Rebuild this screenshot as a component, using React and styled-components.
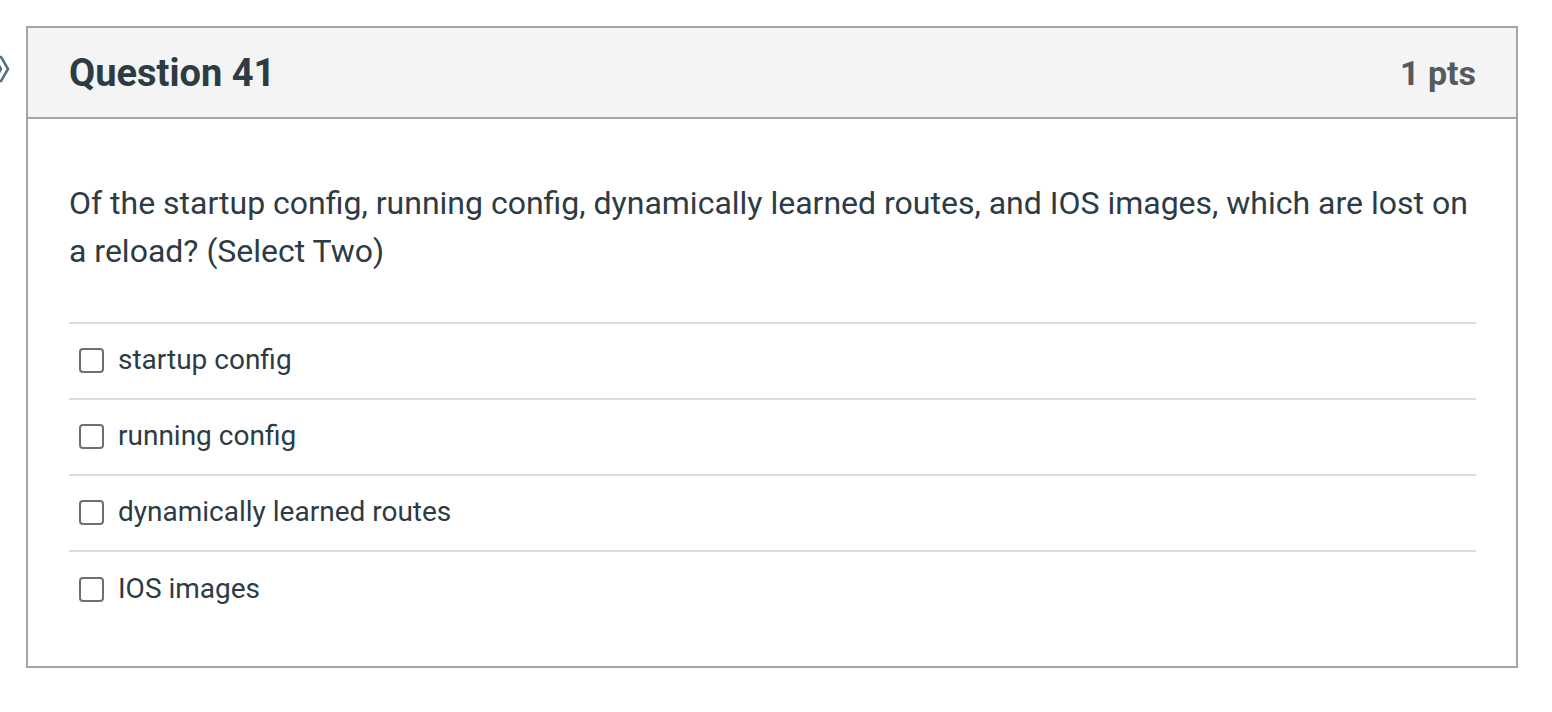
import React from "react";
import styled, { createGlobalStyle } from "styled-components";

const Global = createGlobalStyle`
  html, body { margin: 0; padding: 0; background: #fff; }
  body { font-family: Roboto, "Liberation Sans", sans-serif; color: #2d3b45; }
`;

const Page = styled.div`
  position: relative;
  padding: 26px 35px 0 26px;
  width: 1552px;
  box-sizing: border-box;
`;

const Marker = styled.svg`
  position: absolute;
  left: -8px;
  top: 54px;
`;

const Card = styled.div`
  width: 1492px;
  border: 2px solid #a5a5a5;
  box-sizing: border-box;
`;

const Header = styled.div`
  display: flex;
  align-items: center;
  justify-content: space-between;
  height: 91px;
  background: #f4f4f4;
  border-bottom: 2px solid #a5a5a5;
  padding: 0 40px 0 41px;
  box-sizing: border-box;
`;

const Title = styled.h2`
  margin: 0;
  font-size: 38px;
  font-weight: 700;
  color: #2d3b45;
`;

const Points = styled.div`
  font-size: 34px;
  font-weight: 700;
  color: #555a5e;
`;

const Body = styled.div`
  padding: 60px 40px 38px 41px;
`;

const Text = styled.p`
  margin: 0 0 47px;
  font-size: 32px;
  line-height: 48px;
  color: #2d3b45;
`;

const Answers = styled.div`
  display: flex;
  flex-direction: column;
  border-top: 2px solid #dcdcdc;
`;

const Answer = styled.label`
  display: flex;
  align-items: center;
  height: 76px;
  box-sizing: border-box;
  border-bottom: ${(p) => (p.$last ? "none" : "2px solid #dcdcdc")};
  padding: 0 0 4px 10px;
  gap: 14px;
  font-size: 28px;
  color: #2d3b45;
`;

const Box = styled.span`
  width: 21px;
  height: 21px;
  margin-top: 2px;
  border: 2px solid #6f6f6f;
  border-radius: 4px;
  flex: none;
`;

const answers = [
  "startup config",
  "running config",
  "dynamically learned routes",
  "IOS images",
];

export default function App() {
  return (
    <Page>
      <Global />
      <Marker width="18" height="30" viewBox="0 0 18 30">
        <path d="M2 3 L9 3 L16 15 L9 27 L2 27 L9 15 Z" fill="none" stroke="#557080" strokeWidth="2.5" strokeLinejoin="round" />
      </Marker>
      <Card>
        <Header>
          <Title>Question 41</Title>
          <Points>1 pts</Points>
        </Header>
        <Body>
          <Text>
            Of the startup config, running config, dynamically learned routes, and IOS images, which are lost on a reload? (Select Two)
          </Text>
          <Answers>
            {answers.map((a, i) => (
              <Answer key={a} $last={i === answers.length - 1}>
                <Box />
                {a}
              </Answer>
            ))}
          </Answers>
        </Body>
      </Card>
    </Page>
  );
}
